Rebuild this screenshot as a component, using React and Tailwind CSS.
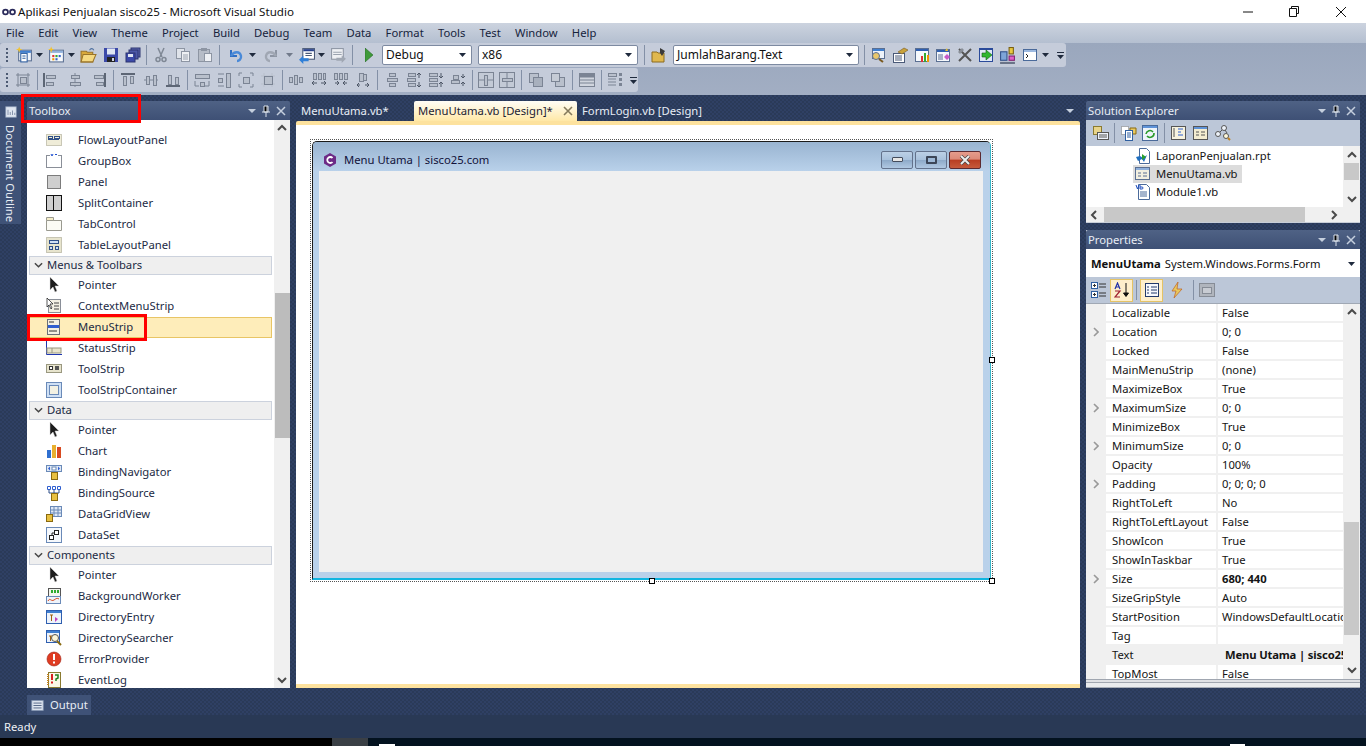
import React from 'react';

const Svg = ({ children, className = '' }) => (
    <svg viewBox="0 0 16 16" className={`${className.includes('w-') && !className.includes('w-4') ? '' : 'w-4 h-4'} ${className} shrink-0`} fill="none">{children}</svg>
);

const Chev = ({ dir = 'up', className = '' }) => {
    const d = { up: 'M2 7l4-4 4 4', down: 'M2 4l4 4 4-4', left: 'M7 2L3 6l4 4', right: 'M4 2l4 4-4 4' }[dir];
    return (
        <svg viewBox="0 0 12 12" className={`w-3 h-3 ${className}`} fill="none">
            <path d={d} stroke="#4a4a4a" strokeWidth="2" />
        </svg>
    );
};

const Drop = ({ className = '' }) => (
    <svg viewBox="0 0 7 4" className={`w-[7px] h-[4px] shrink-0 ${className}`}><path d="M0 0h7L3.5 4z" fill="#1f2a3d" /></svg>
);

// grey alignment glyphs of the layout toolbar
const g = '#7b8494';
const gl = '#b9c0cc';
const Box = ({ x, y, w, h }) => <rect x={x + 0.5} y={y + 0.5} width={w} height={h} fill={gl} stroke={g} />;
const L = ({ d, c = g }) => <path d={d} stroke={c} />;

const layoutIcons = {
    grid: <><L d="M3 1v14M13 1v14M1 3h14M1 13h14" /><Box x={5} y={5} w={6} h={6} /></>,
    left: <><path d="M2 1v14" stroke="#5d6675" strokeWidth="2" /><Box x={4} y={3} w={9} h={3} /><Box x={4} y={10} w={7} h={3} /></>,
    center: <><L d="M8 1v14" /><Box x={4} y={3} w={8} h={3} /><Box x={3} y={10} w={10} h={3} /></>,
    right: <><path d="M14 1v14" stroke="#5d6675" strokeWidth="2" /><Box x={3} y={3} w={9} h={3} /><Box x={5} y={10} w={7} h={3} /></>,
    top: <><path d="M1 2h14" stroke="#5d6675" strokeWidth="2" /><Box x={3} y={4} w={3} h={9} /><Box x={10} y={4} w={3} h={7} /></>,
    middle: <><L d="M1 8h14" /><Box x={3} y={4} w={3} h={8} /><Box x={10} y={3} w={3} h={10} /></>,
    bottom: <><path d="M1 14h14" stroke="#5d6675" strokeWidth="2" /><Box x={3} y={3} w={3} h={9} /><Box x={10} y={5} w={3} h={7} /></>,
    width: <><Box x={1} y={2} w={14} h={4} /><L d="M1 9v5h4M15 9v5h-4" /><Box x={6} y={10} w={4} h={4} /></>,
    height: <><Box x={10} y={1} w={4} h={14} /><L d="M2 2h6M2 14h6" /><Box x={2} y={6} w={4} h={4} /></>,
    size: <><L d="M1 4V1h3M12 1h3v3M1 12v3h3M12 15h3v-3" /><Box x={5} y={5} w={6} h={6} /></>,
    fit: <><L d="M1 4h14M1 12h14M4 1v14M12 1v14" c={gl} /><Box x={4} y={4} w={8} h={8} /></>,
    hs1: <><Box x={1} y={5} w={3} h={5} /><Box x={6} y={3} w={3} h={9} /><Box x={11} y={5} w={3} h={5} /></>,
    hs2: <><L d="M1 11h5M3 13l-2-2 2-2M15 11h-5M13 13l2-2-2-2" c="#4d5666" /><Box x={2} y={1} w={3} h={6} /><Box x={7} y={1} w={3} h={6} /><Box x={12} y={1} w={2} h={6} /></>,
    hs3: <><L d="M2 11h4M4 9l2 2-2 2M14 11h-4M12 9l-2 2 2 2" c="#4d5666" /><Box x={1} y={1} w={3} h={6} /><Box x={6} y={1} w={3} h={6} /><Box x={11} y={1} w={3} h={6} /></>,
    hs4: <><L d="M2 13h3M10 13h4M4 11l-2 2 2 2M12 11l2 2-2 2" c="#4d5666" /><Box x={4} y={1} w={4} h={8} /><Box x={8} y={2} w={3} h={6} /></>,
    vs1: <><Box x={5} y={1} w={6} h={3} /><Box x={3} y={6} w={10} h={3} /><Box x={5} y={11} w={6} h={3} /></>,
    vs2: <><L d="M13 1v5M11 3l2-2 2 2M13 15v-5M11 13l2 2 2-2" c="#4d5666" /><Box x={2} y={1} w={7} h={3} /><Box x={1} y={6} w={8} h={3} /><Box x={2} y={11} w={7} h={3} /></>,
    vs3: <><L d="M13 1v5M11 4l2 2 2-2M13 15v-5M11 12l2-2 2 2" c="#4d5666" /><Box x={1} y={1} w={8} h={3} /><Box x={1} y={6} w={8} h={3} /><Box x={1} y={11} w={8} h={3} /></>,
    vs4: <><L d="M13 2v4M11 4l2 2 2-2M13 14v-4M11 12l2-2 2 2" c="#4d5666" /><Box x={3} y={3} w={5} h={4} /><Box x={1} y={8} w={8} h={3} /></>,
    ch: <><rect x="0.500" y="0.500" width="15" height="15" fill="#c3cad6" stroke={g} /><L d="M1 8h14" /><Box x={6} y={3} w={3} h={10} /></>,
    cv: <><rect x="0.500" y="0.500" width="15" height="15" fill="#c3cad6" stroke={g} /><L d="M8 1v14" /><Box x={3} y={6} w={10} h={3} /></>,
    front: <><Box x={1} y={1} w={9} h={9} /><rect x="5.500" y="5.500" width="9" height="9" fill="#a8b0bd" stroke={g} /></>,
    back: <><Box x={5} y={5} w={9} h={9} /><rect x="1.500" y="1.500" width="8" height="8" fill="#c5cbd5" stroke={g} /></>,
    tab: <><rect x="0.500" y="1.500" width="15" height="13" fill="#d0d5de" stroke={g} /><L d="M1 5h14M1 8h14M1 11h14" /><path d="M1 2h14v3H1z" fill={g} /></>,
    order: <><Box x={1} y={1} w={8} h={3} /><L d="M1 7h8M1 10h8M1 13h8" /><path d="M12 1h3v3h-3zM12 6h3v3h-3zM12 11h3v3h-3z" fill={g} /></>,
};

const Sep = ({ className = '' }) => <div className={`w-px h-[20px] bg-[#8390a6] shrink-0 ${className}`} />;

const Grip = () => (
    <div className="w-[2px] h-[14px] ml-[6px] flex flex-col justify-between shrink-0">
        <span className="w-[2px] h-[2px] bg-[#4c5a72]" />
        <span className="w-[2px] h-[2px] bg-[#4c5a72]" />
        <span className="w-[2px] h-[2px] bg-[#4c5a72]" />
        <span className="w-[2px] h-[2px] bg-[#4c5a72]" />
    </div>
);

const Overflow = () => (
    <div className="flex flex-col gap-[2px] items-center">
        <span className="w-[7px] h-px bg-[#1f2a3d]" />
        <Drop />
    </div>
);

const Combo = ({ label, className }) => (
    <div className={`h-[20px] bg-white border border-[#7d8aa1] rounded-[2px] flex items-center justify-between pl-[3px] pr-[5px] text-[#111] text-[12px] shrink-0 ${className}`}>
        <span>{label}</span>
        <Drop />
    </div>
);

const ToolbarOne = () => (
    <div className="h-[24px] w-[1066px] bg-[#c5ccda] rounded-[3px] flex items-center">
        <Grip />
        <Svg className="w-[17px] h-[18px] ml-[8px]">
            <rect x="2.500" y="3.500" width="12" height="10" fill="#eef3fa" stroke="#5a6f92" />
            <rect x="3" y="4" width="11" height="2" fill="#3f7fd0" />
            <rect x="4.500" y="6.500" width="6" height="8" fill="#fff" stroke="#2f5fa0" />
            <path d="M6 9h3M6 11h3" stroke="#2f5fa0" />
            <path d="M3 0l.8 2L6 2.800 3.800 3.600 3 6l-.8-2.400L0 2.800 2.200 2z" fill="#f2c22e" />
        </Svg>
        <Drop className="ml-[3px]" />
        <Svg className="w-[17px] h-[18px] ml-[5px]">
            <rect x="1.500" y="3.500" width="13" height="11" fill="#f8fafc" stroke="#5a6f92" />
            <rect x="2" y="4" width="12" height="2" fill="#8fb0dc" />
            <path d="M4 8h2v2H4z" fill="#d33" /><path d="M7 8h2v2H7z" fill="#3a3" /><path d="M10 8h2v2h-2z" fill="#36c" /><path d="M4 11h2v2H4z" fill="#e90" /><path d="M7 11h2v2H7z" fill="#36c" />
            <path d="M3 0l.8 2L6 2.800 3.800 3.600 3 6l-.8-2.400L0 2.800 2.200 2z" fill="#f2c22e" />
        </Svg>
        <Drop className="ml-[3px]" />
        <Svg className="w-[17px] h-[17px] ml-[5px]">
            <path d="M1 4h5l1 1h5v9H1z" fill="#d9a93b" stroke="#9a742a" />
            <path d="M1 14l2-7h12l-3 7z" fill="#f5d982" stroke="#9a742a" />
            <path d="M9 3c1-2 3-2 4 0" stroke="#4d6f9e" />
        </Svg>
        <Svg className="w-[16px] h-[16px] ml-[6px]">
            <rect x="1" y="1" width="14" height="14" fill="#3b49a8" />
            <rect x="4" y="1.500" width="8" height="6" fill="#dfe6f2" />
            <rect x="4" y="10" width="8" height="5" fill="#222" /><rect x="9" y="11" width="2" height="3" fill="#cfd5e2" />
        </Svg>
        <Svg className="w-[16px] h-[16px] ml-[6px]">
            <rect x="6" y="1" width="9" height="9" fill="#5a66b0" stroke="#2d3570" />
            <rect x="4" y="3" width="9" height="9" fill="#4c58a8" stroke="#2d3570" />
            <rect x="1" y="6" width="9" height="9" fill="#3b49a8" stroke="#2d3570" />
            <rect x="3" y="7" width="5" height="3" fill="#dfe6f2" />
        </Svg>
        <Sep className="ml-[5px]" />
        <Svg className="ml-[6px]"><path d="M5 1l4 9M11 1L7 10" stroke="#7f8895" strokeWidth="1.500" /><circle cx="5" cy="12.500" r="2" stroke="#7f8895" strokeWidth="1.500" /><circle cx="11" cy="12.500" r="2" stroke="#7f8895" strokeWidth="1.500" /></Svg>
        <Svg className="ml-[6px]"><rect x="1.500" y="1.500" width="8" height="10" fill="#dfe3ea" stroke="#8d95a3" /><rect x="6.500" y="4.500" width="8" height="10" fill="#eef0f4" stroke="#8d95a3" /><path d="M8 8h5M8 10h5M8 12h5" stroke="#9aa2af" /></Svg>
        <Svg className="ml-[6px]"><rect x="1.500" y="2.500" width="11" height="12" fill="#b6bcc7" stroke="#8d95a3" /><rect x="4" y="1" width="6" height="3" fill="#8d95a3" /><rect x="7.500" y="6.500" width="7" height="8" fill="#eef0f4" stroke="#8d95a3" /></Svg>
        <Sep className="ml-[6px]" />
        <Svg className="ml-[8px]"><path d="M3 3v6h6" stroke="#2f6fc4" strokeWidth="2" /><path d="M3 9c3-5 9-5 10 0 .5 3-2 5-4 5" stroke="#4a8ad8" strokeWidth="2.400" /></Svg>
        <Drop className="ml-[5px]" />
        <Svg className="ml-[7px]"><path d="M13 3v6H7" stroke="#8d95a3" strokeWidth="2" /><path d="M13 9C10 4 4 4 3 9c-.5 3 2 5 4 5" stroke="#a0a7b3" strokeWidth="2.400" /></Svg>
        <Drop className="ml-[7px] opacity-50" />
        <Svg className="w-[17px] h-[17px] ml-[5px]"><rect x="4.500" y="1.500" width="11" height="10" fill="#fff" stroke="#4a5a78" /><rect x="5" y="2" width="10" height="2" fill="#27408b" /><path d="M7 6h6M7 8h6" stroke="#4a5a78" /><path d="M1 12l4-4v2.500h5v3H5V16z" fill="#2f7fd8" /></Svg>
        <Drop className="ml-[3px]" />
        <Svg className="w-[17px] h-[17px] ml-[5px]"><rect x="1.500" y="1.500" width="11" height="10" fill="#eef0f4" stroke="#8d95a3" /><path d="M3 5h8M3 7h8" stroke="#9aa2af" /><path d="M15 11l-4-3v2H6v3h5v2z" fill="#a0a7b3" /></Svg>
        <Sep className="ml-[5px]" />
        <svg viewBox="0 0 8 14" className="w-[8px] h-[14px] ml-[12px] shrink-0"><path d="M0 0l8 7-8 7z" fill="#3f9a3a" stroke="#2a6a2a" strokeWidth=".6" /></svg>
        <Combo label="Debug" className="w-[90px] ml-[9px]" />
        <Combo label="x86" className="w-[160px] ml-[6px]" />
        <Sep className="ml-[6px]" />
        <Svg className="ml-[6px]"><path d="M1 5h5l1 1h6v9H1z" fill="#e0b84e" stroke="#8a6a20" /><path d="M9 1l5 3-3 5-2-3z" fill="#3a3a3a" /></Svg>
        <Combo label="JumlahBarang.Text" className="w-[186px] ml-[6px]" />
        <Sep className="ml-[5px]" />
        <Svg className="ml-[5px]"><rect x="2.500" y="1.500" width="12" height="10" fill="#eef3fa" stroke="#5a6f92" /><rect x="3" y="2" width="11" height="2" fill="#3f7fd0" /><circle cx="6" cy="9" r="3.500" fill="#e9c76a" stroke="#5a6f92" /><path d="M9 12l4 3" stroke="#7a5a20" strokeWidth="2" /></Svg>
        <Svg className="ml-[6px]"><rect x="1.500" y="6.500" width="11" height="9" fill="#fff" stroke="#4a5a78" /><path d="M3 9h7M3 11h7M3 13h7" stroke="#4a5a78" /><path d="M6 5l6-4 4 2-6 4z" fill="#c9a23a" stroke="#7a5a20" strokeWidth=".6" /></Svg>
        <Svg className="ml-[6px]"><rect x="1.500" y="1.500" width="13" height="13" fill="#f5f8fc" stroke="#5a6f92" /><rect x="2" y="2" width="12" height="2" fill="#2f5fb0" /><rect x="7" y="9" width="2" height="6" fill="#d33" /><rect x="10" y="6" width="2" height="9" fill="#3a3" /><rect x="13" y="8" width="2" height="7" fill="#e90" /></Svg>
        <Svg className="ml-[5px]"><rect x="1.500" y="2.500" width="13" height="12" fill="#f5f8fc" stroke="#5a6f92" /><rect x="2" y="3" width="12" height="2" fill="#2f5fb0" /><path d="M3 8h5M3 10h5M3 12h5" stroke="#5a6f92" /><path d="M12 1l1 3-3 0z" fill="#e8c030" /><path d="M12 7l3 3-3 3-3-3z" fill="#c85ac8" /></Svg>
        <Svg className="ml-[6px]"><path d="M2 2l12 12M14 2L2 14" stroke="#555" strokeWidth="2" /><path d="M1 5l4-4 2 2-4 4z" fill="#8a8f98" /></Svg>
        <Svg className="ml-[5px]"><rect x="1" y="1" width="14" height="14" fill="#2a4a9a" /><rect x="2" y="3" width="12" height="11" fill="#dfe8f5" /><path d="M4 6h4V3l6 5-6 5v-3H4z" fill="#2fb82f" stroke="#156015" strokeWidth=".6" /></Svg>
        <Svg className="w-[17px] h-[17px] ml-[5px]"><rect x="1.500" y="4.500" width="6" height="8" fill="#7da4d8" stroke="#2f4f88" /><rect x="9.500" y="0.500" width="4" height="6" fill="#e8c840" stroke="#7a6010" /><rect x="9.500" y="8.500" width="5" height="4" fill="#e060c8" stroke="#802070" /><rect x="1" y="14" width="14" height="2" fill="#6a7488" /></Svg>
        <Svg className="ml-[6px]"><rect x="1.500" y="2.500" width="13" height="11" fill="#fff" stroke="#4a6a9a" /><rect x="2" y="3" width="12" height="2" fill="#9db9e0" /><path d="M4 7l2 2-2 2" stroke="#222" /></Svg>
        <Drop className="ml-[4px]" />
        <div className="ml-[8px]"><Overflow /></div>
    </div>
);

const layoutRow = [
    ['grid', 'ml-[7px]'], ['sep'], ['left', 'ml-[4px]'], ['center', 'ml-[9px]'], ['right', 'ml-[8px]'], ['sep'],
    ['top', 'ml-[6px]'], ['middle', 'ml-[7px]'], ['bottom', 'ml-[6px]'], ['sep'],
    ['width', 'ml-[6px]'], ['height', 'ml-[6px]'], ['size', 'ml-[6px]'], ['fit', 'ml-[6px]'], ['sep'],
    ['hs1', 'ml-[5px]'], ['hs2', 'ml-[7px]'], ['hs3', 'ml-[6px]'], ['hs4', 'ml-[6px]'], ['sep'],
    ['vs1', 'ml-[6px]'], ['vs2', 'ml-[6px]'], ['vs3', 'ml-[6px]'], ['vs4', 'ml-[6px]'], ['sep'],
    ['ch', 'ml-[5px]'], ['cv', 'ml-[5px]'], ['sep'],
    ['front', 'ml-[6px]'], ['back', 'ml-[6px]'], ['sep'],
    ['tab', 'ml-[6px]'], ['sep'],
    ['order', 'ml-[5px]'],
];

const ToolbarTwo = () => (
    <div className="h-[24px] w-[638px] bg-[#c5ccda] rounded-[3px] flex items-center">
        <Grip />
        {layoutRow.map(([name, cls], i) => name === 'sep'
            ? <Sep key={i} className="ml-[6px]" />
            : <Svg key={i} className={cls}>{layoutIcons[name]}</Svg>)}
        <div className="ml-[7px]"><Overflow /></div>
    </div>
);

const PanelHeader = ({ title }) => (
    <div className="h-[19px] shrink-0 bg-gradient-to-b from-[#4f6285] to-[#3e5075] rounded-t-[2px] flex items-center pl-[2px] pr-[4px] text-[#e8edf5]">
        <span className="flex-1">{title}</span>
        <svg viewBox="0 0 8 4" className="w-[8px] h-[4px] mr-[6px]"><path d="M0 0h8L4 4z" fill="#c5cfde" /></svg>
        <svg viewBox="0 0 8 12" className="w-[8px] h-[12px] mr-[6px]"><path d="M2 1h4v6H2zM0 7h8M4 7v5" stroke="#dbe2ec" /><path d="M5 1v6" stroke="#dbe2ec" /></svg>
        <svg viewBox="0 0 10 10" className="w-[10px] h-[10px]"><path d="M1 1l8 8M9 1L1 9" stroke="#c5cfde" strokeWidth="1.500" /></svg>
    </div>
);

const Pointer = () => (
    <Svg><path d="M4 0v13l3-3 2 5 2-1-2-5h4z" fill="#1d1d1d" stroke="#d8d8d8" strokeWidth=".5" /></Svg>
);

const toolIcons = {
    pointer: <Pointer />,
    flow: <Svg><rect x="0.500" y="2.500" width="15" height="11" fill="#efecd8" stroke="#9a9880" strokeDasharray="1 1" /><rect x="2.500" y="4.500" width="4" height="2" stroke="#2f4f88" /><rect x="8.500" y="4.500" width="5" height="2" stroke="#2f4f88" /><path d="M2 7.500h11" stroke="#2f4f88" /></Svg>,
    group: <Svg><rect x="0.500" y="2.500" width="15" height="12" fill="#fff" stroke="#8a8f98" /><path d="M4 1h8v3H4z" fill="#fff" /><path d="M5 1l1 2 1-2M9 1l1 1 1-1" stroke="#2050d0" /></Svg>,
    panel: <Svg><rect x="1.500" y="1.500" width="13" height="13" fill="#cfcfcf" stroke="#111" strokeDasharray="1 1" /></Svg>,
    split: <Svg><rect x="0.500" y="0.500" width="15" height="15" fill="#cfcfcf" stroke="#111" /><path d="M7.500 0v16" stroke="#111" /></Svg>,
    tab: <Svg><path d="M.5 4.500h15v10H.5z" fill="#fbfbf5" stroke="#9a9a90" /><path d="M.5 1.500h7v3h-7z" fill="#f5edc8" stroke="#9a9a90" /></Svg>,
    table: <Svg><rect x="0.500" y="0.500" width="15" height="15" fill="#e7e4cd" stroke="#9a9880" strokeDasharray="1 1" /><rect x="3.500" y="3.500" width="9" height="3" fill="#cfe0f5" stroke="#2f4f88" /><rect x="3.500" y="9.500" width="3" height="3" fill="#cfe0f5" stroke="#2f4f88" /><rect x="9.500" y="9.500" width="3" height="3" fill="#cfe0f5" stroke="#2f4f88" /></Svg>,
    context: <Svg><rect x="2.500" y="1.500" width="12" height="13" fill="#f3f1e3" stroke="#8a8f98" /><path d="M8 5h5M8 8h5M8 11h5" stroke="#444" /><path d="M1 0v9l2-2 2 4 1-1-2-4h3z" fill="#fff" stroke="#111" strokeWidth=".7" /></Svg>,
    menu: <Svg><rect x="1.500" y="0.500" width="12" height="15" fill="#f3f1e3" stroke="#6a6f78" /><path d="M3 3h5M3 12h8" stroke="#333" /><rect x="2" y="6" width="11" height="3" fill="#2f5fd0" /></Svg>,
    status: <Svg><path d="M.5 0v14.500H16" stroke="#2038b0" /><rect x="1" y="8" width="14" height="5" fill="#e9e5cc" stroke="#9a9880" /><path d="M6 8v5" stroke="#9a9880" /></Svg>,
    toolstrip: <Svg><rect x="0.500" y="3.500" width="15" height="8" fill="#e7e4cd" stroke="#9a9880" /><rect x="3.500" y="5.500" width="3" height="3" fill="#fff" stroke="#333" /><rect x="9" y="5" width="4" height="4" fill="#555" /></Svg>,
    stripc: <Svg><rect x="0.500" y="0.500" width="15" height="15" fill="#cfe0f5" stroke="#6a8ab8" /><rect x="3.500" y="3.500" width="9" height="9" fill="#f3f1e3" stroke="#6a8ab8" /></Svg>,
    chart: <Svg><rect x="1" y="7" width="4" height="8" fill="#2f6fd0" /><rect x="6" y="2" width="4" height="13" fill="#e8b030" /><rect x="11" y="4" width="4" height="11" fill="#d84a20" /></Svg>,
    bindnav: <Svg><rect x="0.500" y="1.500" width="15" height="6" fill="#dfe8f5" stroke="#6a8ab8" /><path d="M2 4.500l2-2v4zM14 4.500l-2-2v4z" fill="#2f5fd0" /><rect x="6" y="3" width="4" height="3" fill="#fff" stroke="#6a8ab8" /><rect x="5.500" y="8.500" width="6" height="7" fill="#e8c040" stroke="#8a6a10" /></Svg>,
    bindsrc: <Svg><path d="M1.500 1.500h3v3h-3zM6.500 1.500h3v3h-3zM11.500 1.500h3v3h-3z" fill="#fff" stroke="#2f5fd0" /><path d="M3 5v3h10V5M8 5v3" stroke="#2f4f88" /><rect x="5.500" y="8.500" width="6" height="7" fill="#e8c040" stroke="#8a6a10" /></Svg>,
    grid: <Svg><rect x="4.500" y="0.500" width="11" height="10" fill="#dfe8f5" stroke="#6a8ab8" /><path d="M4 4h12M4 7h12M8 0v10M12 0v10" stroke="#6a8ab8" /><rect x="0.500" y="8.500" width="6" height="7" fill="#e8c040" stroke="#8a6a10" /></Svg>,
    dataset: <Svg><rect x="0.500" y="0.500" width="15" height="15" fill="#f5f8fc" stroke="#6a8ab8" /><rect x="3.500" y="8.500" width="4" height="4" fill="#fff" stroke="#222" /><rect x="8.500" y="3.500" width="4" height="4" fill="#fff" stroke="#222" /><path d="M6 8V6h2" stroke="#222" /></Svg>,
    worker: <Svg><rect x="2.500" y="0.500" width="12" height="9" fill="#f3f5ef" stroke="#555" /><path d="M5 2h2v3H5zM8 2h2v3H8zM11 2h2v3h-2z" fill="#2faa2f" /><rect x="0.500" y="8.500" width="14" height="7" fill="#eef3fa" stroke="#6a8ab8" /><path d="M2 13c2-4 3 1 6-1s3-2 5-1" stroke="#d84a20" /></Svg>,
    direntry: <Svg><rect x="0.500" y="1.500" width="15" height="13" fill="#eef3fa" stroke="#2f5fb0" /><rect x="1" y="2" width="14" height="2" fill="#3f7fd0" /><path d="M4 6h3M5.500 6v6" stroke="#a06010" /><path d="M9 8l3 2-3 3z" fill="#c040c0" /></Svg>,
    dirsearch: <Svg><rect x="0.500" y="0.500" width="13" height="12" fill="#eef3fa" stroke="#2f5fb0" /><rect x="1" y="1" width="12" height="2" fill="#3f7fd0" /><circle cx="9" cy="8" r="3.500" fill="#fdf6d8" stroke="#555" /><path d="M11 11l4 4" stroke="#8a6a10" strokeWidth="2" /><path d="M3 6h3M4.500 6v5" stroke="#a06010" /></Svg>,
    error: <Svg><circle cx="8" cy="8" r="7" fill="#df3c22" stroke="#a02010" strokeWidth=".6" /><rect x="7" y="3" width="2" height="6" fill="#fff" /><rect x="7" y="10.500" width="2" height="2" fill="#fff" /></Svg>,
    eventlog: <Svg><rect x="2.500" y="0.500" width="12" height="15" fill="#fbf8e6" stroke="#8a7a30" /><path d="M2 2v12" stroke="#c08020" strokeWidth="2" strokeDasharray="1 1" /><rect x="5" y="2" width="2" height="6" fill="#d82020" /><rect x="5" y="9.500" width="2" height="2" fill="#d82020" /><path d="M9 3h3v3l-2 1v2" stroke="#208020" strokeWidth="1.500" /></Svg>,
};

const toolboxGroups = [
    { items: [['FlowLayoutPanel', 'flow'], ['GroupBox', 'group'], ['Panel', 'panel'], ['SplitContainer', 'split'], ['TabControl', 'tab'], ['TableLayoutPanel', 'table']] },
    { title: 'Menus & Toolbars', items: [['Pointer', 'pointer'], ['ContextMenuStrip', 'context'], ['MenuStrip', 'menu'], ['StatusStrip', 'status'], ['ToolStrip', 'toolstrip'], ['ToolStripContainer', 'stripc']] },
    { title: 'Data', items: [['Pointer', 'pointer'], ['Chart', 'chart'], ['BindingNavigator', 'bindnav'], ['BindingSource', 'bindsrc'], ['DataGridView', 'grid'], ['DataSet', 'dataset']] },
    { title: 'Components', items: [['Pointer', 'pointer'], ['BackgroundWorker', 'worker'], ['DirectoryEntry', 'direntry'], ['DirectorySearcher', 'dirsearch'], ['ErrorProvider', 'error'], ['EventLog', 'eventlog']] },
];

const Toolbox = () => (
    <div className="w-[263px] h-[587px] flex flex-col shrink-0">
        <PanelHeader title="Toolbox" />
        <div className="flex-1 min-h-0 bg-white flex text-[#1b2a44]">
            <div className="flex-1 overflow-hidden px-[2px]">
                {/* tail of the scrolled-away Pointer row */}
                <div className="h-[10px] overflow-hidden pl-[17px]">
                    <div className="-mt-[13px]"><Pointer /></div>
                </div>
                {toolboxGroups.map((group, i) => (
                    <div key={i}>
                        {group.title && (
                            <div className="h-[19px] pb-px bg-[#efefef] border border-[#ccd2dd] flex items-center pl-[4px]">
                                <svg viewBox="0 0 10 6" className="w-[9px] h-[6px] mr-[4px]"><path d="M1 1l4 4 4-4" stroke="#444" strokeWidth="1.600" fill="none" /></svg>
                                {group.title}
                            </div>
                        )}
                        {group.items.map(([label, icon]) => (
                            <div key={label + i} className={`h-[21px] pb-[2px] flex items-center ${label === 'MenuStrip' ? 'bg-[#feedba] border border-[#e8c565] pl-[16px]' : 'pl-[17px]'}`}>
                                {toolIcons[icon]}
                                <span className="ml-[16px]">{label}</span>
                            </div>
                        ))}
                    </div>
                ))}
            </div>
            <div className="w-[16px] bg-[#f0f0f0] flex flex-col items-center">
                <Chev dir="up" className="mt-[3px]" />
                <div className="w-[15px] h-[145px] bg-[#bcbcbc] mt-[158px]" />
                <div className="flex-1" />
                <Chev dir="down" className="mb-[2px]" />
            </div>
        </div>
    </div>
);

const CaptionButton = ({ children, red }) => (
    <div className={`w-[32px] h-[18px] rounded-[2px] border flex items-center justify-center ${red
        ? 'border-[#5c2a30] bg-[linear-gradient(#e59c8c_0%,#dd8a78_45%,#b83d22_50%,#c65a3c_100%)]'
        : 'border-[#63728c] bg-[linear-gradient(#bcd0e6_0%,#a8c1dc_50%,#8eaac9_52%,#b0c8e2_100%)]'}`}>
        {children}
    </div>
);

const FormWindow = () => (
    <div className="relative ml-[14px] mt-[14px] w-[683px] h-[443px] border border-dotted border-[#555] p-px">
        <div className="h-full border border-[#1a1a1a] rounded-t-[5px] bg-[#b9d1ea] flex flex-col border-b-2 border-b-[#12b5e0] border-r-[#38b6c8]">
            <div className="h-[29px] shrink-0 rounded-t-[4px] bg-gradient-to-b from-[#99b4d1] to-[#b9d1ea] flex items-center pl-[10px] pr-[9px] pt-[6px]">
                <svg viewBox="0 0 14 14" className="w-[14px] h-[14px] shrink-0">
                    <path d="M7 0l6 3.500v7L7 14l-6-3.500v-7z" fill="#6d2a86" />
                    <path d="M9.500 5A3 3 0 1 0 9.500 9" stroke="#fff" strokeWidth="1.800" fill="none" />
                </svg>
                <span className="ml-[7px] flex-1 text-[#12123a]">Menu Utama | sisco25.com</span>
                <div className="flex gap-[2px]">
                    <CaptionButton><span className="w-[11px] h-[5px] bg-[#e6e6e6] border border-[#444c5c] rounded-[1px]" /></CaptionButton>
                    <CaptionButton><span className="w-[11px] h-[8px] border-2 border-[#3c4658] bg-[#9db8d6] rounded-[1px]" /></CaptionButton>
                    <CaptionButton red>
                        <svg viewBox="0 0 12 10" className="w-[12px] h-[10px]"><path d="M2 1l8 8M10 1L2 9" stroke="#444" strokeWidth="3.400" /><path d="M2 1l8 8M10 1L2 9" stroke="#eee" strokeWidth="2" /></svg>
                    </CaptionButton>
                </div>
            </div>
            <div className="flex-1 bg-[#f0f0f0] ml-[6px] mr-[7px] mb-[6px]" />
        </div>
        <div className="absolute -right-[3px] top-[217px] w-[6px] h-[6px] bg-white border border-black" />
        <div className="absolute -right-[3px] -bottom-[3px] w-[6px] h-[6px] bg-white border border-black" />
        <div className="absolute left-[338px] -bottom-[3px] w-[6px] h-[6px] bg-white border border-black" />
    </div>
);

const DocArea = () => (
    <div className="w-[784px] h-[587px] flex flex-col shrink-0">
        <div className="h-[20px] flex items-center shrink-0 relative">
            <span className="ml-[5px] w-[113px] text-[#e8edf5]">MenuUtama.vb*</span>
            <div className="w-[163px] h-[20px] rounded-t-[2px] bg-gradient-to-b from-[#fffdf6] to-[#ffe8a6] flex items-center pl-[4px] text-[#1d1d33]">
                <span className="flex-1">MenuUtama.vb [Design]*</span>
                <svg viewBox="0 0 10 10" className="w-[10px] h-[10px] mr-[4px]"><path d="M1 1l8 8M9 1L1 9" stroke="#857a5c" strokeWidth="1.600" /></svg>
            </div>
            <span className="ml-[5px] flex-1 text-[#e8edf5]">FormLogin.vb [Design]</span>
            <svg viewBox="0 0 8 4" className="w-[8px] h-[4px] mr-[6px]"><path d="M0 0h8L4 4z" fill="#c5cfde" /></svg>
        </div>
        <div className="flex-1 min-h-0 bg-white border-t-4 border-b-4 border-[#fde29e] rounded-t-[2px]">
            <FormWindow />
        </div>
    </div>
);

const SolutionExplorer = () => (
    <div className="h-[122px] flex flex-col border-b border-[#c8ced8]">
        <PanelHeader title="Solution Explorer" />
        <div className="h-[26px] bg-[#bcc7d8] flex items-center pl-[7px] shrink-0">
            <Svg><rect x="0.500" y="1.500" width="8" height="8" fill="#e8d48a" stroke="#8a7a30" /><rect x="4.500" y="7.500" width="11" height="7" fill="#eef3fa" stroke="#555" /><path d="M6 10h8M6 12h8" stroke="#555" /></Svg>
            <Sep className="ml-[5px]" />
            <Svg className="ml-[6px]"><rect x="0.500" y="1.500" width="7" height="8" fill="#fff" stroke="#777" strokeDasharray="1 1" /><path d="M9 3h6v6H9z" fill="#e8c860" stroke="#8a6a10" /><rect x="4.500" y="5.500" width="7" height="10" fill="#fff" stroke="#2f5fa0" /><path d="M6 8h4M6 10h4M6 12h4" stroke="#2f5fa0" /></Svg>
            <Svg className="ml-[5px]"><rect x="0.500" y="0.500" width="15" height="15" fill="#eef3fa" stroke="#4a6a9a" /><rect x="1" y="1" width="14" height="2" fill="#5f93d8" /><path d="M4 9a4 4 0 0 1 7-2M12 8a4 4 0 0 1-7 3" stroke="#2a9a2a" strokeWidth="1.600" /></Svg>
            <Sep className="ml-[6px]" />
            <Svg className="ml-[6px]"><rect x="0.500" y="1.500" width="14" height="13" fill="#f7f3df" stroke="#555" /><path d="M7 4h5M7 7h3M7 10h5" stroke="#2f5fd0" /><path d="M3 3v9" stroke="#555" /></Svg>
            <Svg className="ml-[6px]"><rect x="0.500" y="1.500" width="14" height="13" fill="#f3ecd0" stroke="#555" /><rect x="1" y="2" width="13" height="2" fill="#5f93d8" /><path d="M3 7h3M3 10h3M8 7h4M8 10h4" stroke="#555" /></Svg>
            <Svg className="ml-[6px]"><circle cx="9" cy="3" r="2.500" fill="#eef3fa" stroke="#555" /><circle cx="3" cy="9" r="2.500" fill="#eef3fa" stroke="#555" /><path d="M7 5L5 7M10 5l2 3" stroke="#555" /><circle cx="11" cy="11" r="2.500" fill="#fdf6d8" stroke="#555" /><path d="M13 13l2 2" stroke="#c08020" strokeWidth="2" /></Svg>
        </div>
        <div className="flex-1 min-h-0 bg-white flex flex-col">
            <div className="h-[61px] flex">
                <div className="flex-1 pt-[1px] pl-[47px] text-[#141414] flex flex-col">
                    <div className="h-[18px] flex items-center w-[109px] pl-[2px] whitespace-nowrap">
                        <Svg><path d="M4.500.5h7l3 3v12h-10z" fill="#fff" stroke="#4a6a9a" /><path d="M1 9l4-1 3 2 4-3-3 7-2-3-4 2z" fill="#1f6fc0" /><path d="M7 6l4 3-4 3z" fill="#2aa02a" /></Svg>
                        <span className="ml-[5px]">LaporanPenjualan.rpt</span>
                    </div>
                    <div className="h-[18px] flex items-center w-[109px] pl-[2px] bg-[#dcdcdc]">
                        <Svg><rect x="0.500" y="1.500" width="14" height="12" fill="#f2efe0" stroke="#5a6f92" /><rect x="1" y="2" width="13" height="2" fill="#8fb0dc" /><path d="M3 7h3M3 10h3M8 7h4M8 10h4" stroke="#5a6f92" /></Svg>
                        <span className="ml-[5px] whitespace-nowrap">MenuUtama.vb</span>
                    </div>
                    <div className="h-[18px] flex items-center pl-[2px]">
                        <Svg><path d="M3.500.5h8l3 3v12h-11z" fill="#fff" stroke="#4a6a9a" /><path d="M5 8h7M5 10h7M5 12h7" stroke="#4a6a9a" /><path d="M1 1l1.500 4L4 1M5 1v4h2a1 1 0 0 0 0-2H5" stroke="#1f4fc0" /></Svg>
                        <span className="ml-[5px]">Module1.vb</span>
                    </div>
                </div>
                <div className="w-[17px] bg-[#f0f0f0] flex flex-col items-center">
                    <Chev dir="up" className="mt-[4px]" />
                    <div className="w-[15px] h-[17px] bg-[#c8c8c8] mt-[1px]" />
                    <div className="flex-1" />
                    <Chev dir="down" className="mb-[2px]" />
                </div>
            </div>
            <div className="flex-1 bg-[#f0f0f0] flex items-center pl-[3px]">
                <Chev dir="left" />
                <div className="h-[15px] w-[201px] bg-[#c8c8c8] ml-[3px]" />
                <div className="flex-1" />
                <Chev dir="right" className="mr-[20px]" />
            </div>
        </div>
    </div>
);

const propRows = [
    ['Localizable', 'False'],
    ['Location', '0; 0', 'exp'],
    ['Locked', 'False'],
    ['MainMenuStrip', '(none)'],
    ['MaximizeBox', 'True'],
    ['MaximumSize', '0; 0', 'exp'],
    ['MinimizeBox', 'True'],
    ['MinimumSize', '0; 0', 'exp'],
    ['Opacity', '100%'],
    ['Padding', '0; 0; 0; 0', 'exp'],
    ['RightToLeft', 'No'],
    ['RightToLeftLayout', 'False'],
    ['ShowIcon', 'True'],
    ['ShowInTaskbar', 'True'],
    ['Size', '680; 440', 'exp', 'bold'],
    ['SizeGripStyle', 'Auto'],
    ['StartPosition', 'WindowsDefaultLocation'],
    ['Tag', ''],
    ['Text', 'Menu Utama | sisco25.com', '', 'sel'],
    ['TopMost', 'False'],
];

const Properties = () => (
    <div className="mt-[7px] h-[458px] flex flex-col bg-[#e4e6ea] border-b border-[#a8aeb8]">
        <PanelHeader title="Properties" />
        <div className="h-[28px] bg-white flex items-center pl-[5px] pr-[4px] pt-px shrink-0 text-[#111]">
            <span className="font-bold">MenuUtama</span>
            <span className="ml-[4px] flex-1">System.Windows.Forms.Form</span>
            <div className="w-[10px] flex justify-center"><Drop /></div>
        </div>
        <div className="h-[27px] bg-[#bcc7d8] flex items-center pl-[2px] shrink-0 border-b border-[#a0a8b4]">
            <Svg className="ml-[3px]"><rect x="0.500" y="0.500" width="6" height="6" fill="#fff" stroke="#2f5fa0" /><rect x="0.500" y="9.500" width="6" height="6" fill="#fff" stroke="#2f5fa0" /><path d="M2 3.500h3M3.500 2v3M2 12.500h3M3.500 11v3M8 2h7M8 5h7M8 11h7M8 14h7" stroke="#333" /></Svg>
            <div className="ml-[3px] w-[23px] h-[23px] bg-[#fdeecb] border border-[#e5c365] flex items-center justify-center">
                <svg viewBox="0 0 16 16" className="w-4 h-4"><path d="M1 7l2.500-6L6 7M2 5h3" stroke="#2030a8" strokeWidth="1.200" fill="none" /><path d="M1 9h5l-5 6h5" stroke="#a02030" strokeWidth="1.200" fill="none" /><path d="M12 1v13M9.500 11l2.500 3.500 2.500-3.500z" stroke="#111" fill="#111" /></svg>
            </div>
            <Sep className="ml-[3px]" />
            <div className="ml-[3px] w-[23px] h-[23px] bg-[#fdeecb] border border-[#e5c365] flex items-center justify-center">
                <Svg><rect x="1.500" y="1.500" width="13" height="13" fill="#f5f7fb" stroke="#223a6a" /><path d="M3 5h2M7 5h6M3 8h2M7 8h6M3 11h2M7 11h6" stroke="#223a6a" /></Svg>
            </div>
            <Svg className="ml-[6px]"><path d="M9 0L3 9h4l-2 7 8-9H8z" fill="#e8c85c" stroke="#c06020" strokeWidth=".7" /></Svg>
            <Sep className="ml-[8px]" />
            <Svg className="ml-[5px]"><rect x="0.500" y="1.500" width="15" height="13" fill="#b0b5bd" stroke="#868c96" /><rect x="3.500" y="5.500" width="9" height="6" fill="#c8ccd3" stroke="#868c96" /></Svg>
        </div>
        <div className="flex-1 min-h-0 flex bg-white">
            <div className="flex-1 min-w-0 overflow-hidden">
                {propRows.map(([name, value, exp, mode]) => (
                    <div key={name} className="h-[19px] flex border-b-2 border-[#f0f0f0] text-[#141414]">
                        <div className="w-[20px] bg-[#f0f0f0] shrink-0 flex items-center justify-center">
                            {exp && <svg viewBox="0 0 6 10" className="w-[6px] h-[10px]"><path d="M1 1l4 4-4 4" stroke="#999" strokeWidth="1.600" fill="none" /></svg>}
                        </div>
                        <div className={`w-[112px] shrink-0 pl-[6px] pt-px flex items-center border-r-2 border-[#f0f0f0] ${mode === 'sel' ? 'bg-[#f0f0f0]' : ''}`}>{name}</div>
                        <div className={`flex-1 min-w-0 pt-px flex items-center whitespace-nowrap overflow-hidden ${mode === 'sel' ? 'bg-[#f0f0f0] pl-[7px] font-bold tracking-[-0.15px]' : 'pl-[4px]'} ${mode === 'bold' ? 'font-bold' : ''}`}>{value}</div>
                    </div>
                ))}
            </div>
            <div className="w-[17px] bg-[#f0f0f0] flex flex-col items-center">
                <Chev dir="up" className="mt-[3px]" />
                <div className="w-[15px] h-[113px] bg-[#c8c8c8] mt-[203px]" />
                <div className="flex-1" />
                <Chev dir="down" className="mb-[3px]" />
            </div>
        </div>
        <div className="h-[3px] border-t border-[#a0a6b0] bg-[#dfe1e5]" />
        <div className="h-[5px] border-t border-[#a0a6b0] bg-[#e9ebee]" />
    </div>
);

const App = () => (
    <div className="w-[1366px] h-[746px] overflow-hidden relative flex flex-col bg-[#293955] font-['Noto_Sans',sans-serif] text-[11.25px] leading-none">
        <div className="h-[23px] bg-white flex items-center shrink-0 text-[#111] text-[11.6px] relative">
            <svg viewBox="0 0 16 8" className="w-[14px] h-[8px] ml-[2px]"><circle cx="4" cy="4" r="2.800" stroke="#2a2a5a" strokeWidth="2" fill="none" /><circle cx="12" cy="4" r="2.800" stroke="#2a2a5a" strokeWidth="2" fill="none" /></svg>
            <span className="ml-[2px] flex-1">Aplikasi Penjualan sisco25 - Microsoft Visual Studio</span>
            <svg viewBox="0 0 10 2" className="w-[10px] h-[2px] mr-[36px]"><path d="M0 1h10" stroke="#111" /></svg>
            <svg viewBox="0 0 10 11" className="w-[10px] h-[11px] mr-[36px]"><path d="M2.500 2.500v-2h7v7h-2M.5 2.500h7v8h-7z" stroke="#111" fill="none" /></svg>
            <svg viewBox="0 0 12 12" className="w-[12px] h-[12px] mr-[19px]"><path d="M1 1l10 10M11 1L1 11" stroke="#111" /></svg>
        </div>
        <div className="h-[20px] shrink-0 bg-gradient-to-b from-[#ccd3df] to-[#b4bfd0] flex items-center pl-[6px] gap-[14.2px] text-[#16233c]">
            {['File', 'Edit', 'View', 'Theme', 'Project', 'Build', 'Debug', 'Team', 'Data', 'Format', 'Tools', 'Test', 'Window', 'Help'].map((m) => (
                <span key={m}>{m}</span>
            ))}
        </div>
        <div className="h-[52px] shrink-0 bg-gradient-to-b from-[#9aa7bd] to-[#a2aec3] flex flex-col gap-px">
            <ToolbarOne />
            <ToolbarTwo />
        </div>
        <div className="flex-1 min-h-0 flex flex-col bg-[repeating-conic-gradient(#2f4064_0_25%,#2a3a58_0_50%)] bg-[length:4px_4px]">
            <div className="flex pt-[6px]">
                <div className="w-[21px] h-[123px] bg-[#3f5277] flex flex-col items-center pt-[5px] shrink-0 text-[#e8edf5]">
                    <Svg className="w-[12px] h-[12px]"><rect x="1" y="1" width="14" height="14" fill="#dfe6f0" stroke="#8a9ab5" /><path d="M4 5v7M7 8v4M10 6v6M13 9v3" stroke="#6a7a95" /></Svg>
                    <span className="mt-[7px] [writing-mode:vertical-lr]">Document Outline</span>
                </div>
                <div className="ml-[6px]"><Toolbox /></div>
                <div className="ml-[6px]"><DocArea /></div>
                <div className="ml-[6px] w-[274px] flex flex-col shrink-0">
                    <SolutionExplorer />
                    <Properties />
                </div>
            </div>
            <div className="flex pt-[7px] pl-[27px]">
                <div className="w-[64px] h-[20px] bg-[#3f5277] flex items-center pl-[4px] text-[#e8edf5]">
                    <Svg className="w-[13px] h-[13px]"><rect x="1" y="2" width="14" height="12" fill="#dfe6f0" stroke="#8a9ab5" /><path d="M3 5h10M3 8h10M3 11h10" stroke="#3c4f74" /></Svg>
                    <span className="ml-[6px]">Output</span>
                </div>
            </div>
        </div>
        <div className="h-[23px] shrink-0 bg-[#293955] flex items-center pl-[4px] text-[#eef1f6]">Ready</div>
        <div className="h-[8px] shrink-0 bg-black flex items-end">
            <div className="w-[332px]" />
            <div className="w-[36px] h-[8px] bg-[#3a3f45]" />
            <div className="flex-1 h-[8px] bg-[#03121f] flex items-end">
                <span className="ml-[11px] w-[16px] h-[2px] bg-white" />
                <span className="ml-[835px] w-[15px] h-[2px] bg-white" />
            </div>
        </div>
        {/* red annotation boxes drawn over the screenshot */}
        <div className="absolute left-[21px] top-[94px] w-[120px] h-[29px] border-[3px] border-[#f00]" />
        <div className="absolute left-[27px] top-[314px] w-[120px] h-[27px] border-[3px] border-[#f00]" />
    </div>
);

export default App;
